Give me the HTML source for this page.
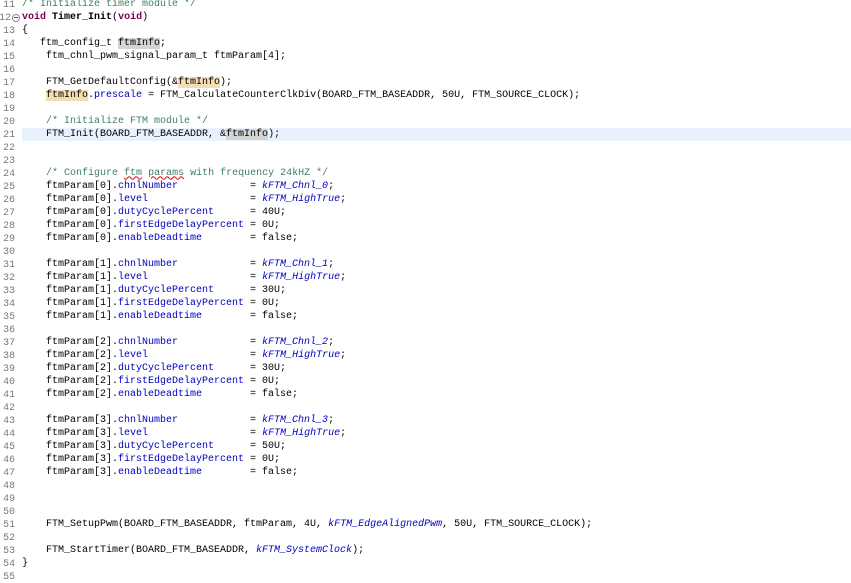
<!DOCTYPE html>
<html><head><meta charset="utf-8"><style>
body{margin:0;width:851px;height:580px;overflow:hidden;background:#fff;font-family:"Liberation Mono",monospace;font-size:10px;color:#000;position:relative}
.r{position:absolute;left:0;width:851px;height:13px;line-height:13px;white-space:pre;margin-top:1px}
.n{position:absolute;left:-20px;width:35px;text-align:right;color:#787878;font-size:9.9px}
.t{position:absolute;left:22px}
.cur{background:#e8f2fe;left:22px;width:829px;position:absolute;height:13px}
.k{color:#7f0055;font-weight:bold}
.c{color:#3f7f5f}
.f{color:#0000c0}
.e{color:#0000c0;font-style:italic}
.g{background:#d4d4d4}
.o{background:#f4dcb4}
.fold{position:absolute;left:12px;top:3px;width:6px;height:6px;border:1px solid #888;border-radius:50%;font-size:0;background:#fff}
.fold:after{content:"";position:absolute;left:1px;top:2.5px;width:4px;height:1px;background:#555}
</style></head><body>
<div class="r" style="top:-3.5px"><span class="n">11</span><span class="t"><span class="c">/* Initialize timer module */</span></span></div>
<div class="r" style="top:9.5px"><span class="n" style="left:-24px">12</span><span class="fold"></span><span class="t"><span class="k">void</span> <b>Timer_Init</b>(<span class="k">void</span>)</span></div>
<div class="r" style="top:22.5px"><span class="n">13</span><span class="t">{</span></div>
<div class="r" style="top:35.5px"><span class="n">14</span><span class="t">   ftm_config_t <span class="g">ftmInfo</span>;</span></div>
<div class="r" style="top:48.5px"><span class="n">15</span><span class="t">    ftm_chnl_pwm_signal_param_t ftmParam[4];</span></div>
<div class="r" style="top:61.5px"><span class="n">16</span></div>
<div class="r" style="top:74.5px"><span class="n">17</span><span class="t">    FTM_GetDefaultConfig(&amp;<span class="o">ftmInfo</span>);</span></div>
<div class="r" style="top:87.5px"><span class="n">18</span><span class="t">    <span class="o">ftmInfo</span>.<span class="f">prescale</span> = FTM_CalculateCounterClkDiv(BOARD_FTM_BASEADDR, 50U, FTM_SOURCE_CLOCK);</span></div>
<div class="r" style="top:100.5px"><span class="n">19</span></div>
<div class="r" style="top:113.5px"><span class="n">20</span><span class="t">    <span class="c">/* Initialize FTM module */</span></span></div>
<div class="r" style="top:126.5px"><span class="cur"></span><span class="n">21</span><span class="t">    FTM_Init(BOARD_FTM_BASEADDR, &amp;<span class="g">ftmInfo</span>);</span></div>
<div class="r" style="top:139.5px"><span class="n">22</span></div>
<div class="r" style="top:152.5px"><span class="n">23</span></div>
<div class="r" style="top:165.5px"><span class="n">24</span><span class="t">    <span class="c">/* Configure <u style="text-decoration-color:#e00;text-decoration-style:wavy">ftm</u> <u style="text-decoration-color:#e00;text-decoration-style:wavy">params</u> with frequency 24kHZ */</span></span></div>
<div class="r" style="top:178.5px"><span class="n">25</span><span class="t">    ftmParam[0].<span class="f">chnlNumber</span>            = <span class="e">kFTM_Chnl_0</span>;</span></div>
<div class="r" style="top:191.5px"><span class="n">26</span><span class="t">    ftmParam[0].<span class="f">level</span>                 = <span class="e">kFTM_HighTrue</span>;</span></div>
<div class="r" style="top:204.5px"><span class="n">27</span><span class="t">    ftmParam[0].<span class="f">dutyCyclePercent</span>      = 40U;</span></div>
<div class="r" style="top:217.5px"><span class="n">28</span><span class="t">    ftmParam[0].<span class="f">firstEdgeDelayPercent</span> = 0U;</span></div>
<div class="r" style="top:230.5px"><span class="n">29</span><span class="t">    ftmParam[0].<span class="f">enableDeadtime</span>        = false;</span></div>
<div class="r" style="top:243.5px"><span class="n">30</span></div>
<div class="r" style="top:256.5px"><span class="n">31</span><span class="t">    ftmParam[1].<span class="f">chnlNumber</span>            = <span class="e">kFTM_Chnl_1</span>;</span></div>
<div class="r" style="top:269.5px"><span class="n">32</span><span class="t">    ftmParam[1].<span class="f">level</span>                 = <span class="e">kFTM_HighTrue</span>;</span></div>
<div class="r" style="top:282.5px"><span class="n">33</span><span class="t">    ftmParam[1].<span class="f">dutyCyclePercent</span>      = 30U;</span></div>
<div class="r" style="top:295.5px"><span class="n">34</span><span class="t">    ftmParam[1].<span class="f">firstEdgeDelayPercent</span> = 0U;</span></div>
<div class="r" style="top:308.5px"><span class="n">35</span><span class="t">    ftmParam[1].<span class="f">enableDeadtime</span>        = false;</span></div>
<div class="r" style="top:321.5px"><span class="n">36</span></div>
<div class="r" style="top:334.5px"><span class="n">37</span><span class="t">    ftmParam[2].<span class="f">chnlNumber</span>            = <span class="e">kFTM_Chnl_2</span>;</span></div>
<div class="r" style="top:347.5px"><span class="n">38</span><span class="t">    ftmParam[2].<span class="f">level</span>                 = <span class="e">kFTM_HighTrue</span>;</span></div>
<div class="r" style="top:360.5px"><span class="n">39</span><span class="t">    ftmParam[2].<span class="f">dutyCyclePercent</span>      = 30U;</span></div>
<div class="r" style="top:373.5px"><span class="n">40</span><span class="t">    ftmParam[2].<span class="f">firstEdgeDelayPercent</span> = 0U;</span></div>
<div class="r" style="top:386.5px"><span class="n">41</span><span class="t">    ftmParam[2].<span class="f">enableDeadtime</span>        = false;</span></div>
<div class="r" style="top:399.5px"><span class="n">42</span></div>
<div class="r" style="top:412.5px"><span class="n">43</span><span class="t">    ftmParam[3].<span class="f">chnlNumber</span>            = <span class="e">kFTM_Chnl_3</span>;</span></div>
<div class="r" style="top:425.5px"><span class="n">44</span><span class="t">    ftmParam[3].<span class="f">level</span>                 = <span class="e">kFTM_HighTrue</span>;</span></div>
<div class="r" style="top:438.5px"><span class="n">45</span><span class="t">    ftmParam[3].<span class="f">dutyCyclePercent</span>      = 50U;</span></div>
<div class="r" style="top:451.5px"><span class="n">46</span><span class="t">    ftmParam[3].<span class="f">firstEdgeDelayPercent</span> = 0U;</span></div>
<div class="r" style="top:464.5px"><span class="n">47</span><span class="t">    ftmParam[3].<span class="f">enableDeadtime</span>        = false;</span></div>
<div class="r" style="top:477.5px"><span class="n">48</span></div>
<div class="r" style="top:490.5px"><span class="n">49</span></div>
<div class="r" style="top:503.5px"><span class="n">50</span></div>
<div class="r" style="top:516.5px"><span class="n">51</span><span class="t">    FTM_SetupPwm(BOARD_FTM_BASEADDR, ftmParam, 4U, <span class="e">kFTM_EdgeAlignedPwm</span>, 50U, FTM_SOURCE_CLOCK);</span></div>
<div class="r" style="top:529.5px"><span class="n">52</span></div>
<div class="r" style="top:542.5px"><span class="n">53</span><span class="t">    FTM_StartTimer(BOARD_FTM_BASEADDR, <span class="e">kFTM_SystemClock</span>);</span></div>
<div class="r" style="top:555.5px"><span class="n">54</span><span class="t">}</span></div>
<div class="r" style="top:568.5px"><span class="n">55</span></div>
</body></html>
